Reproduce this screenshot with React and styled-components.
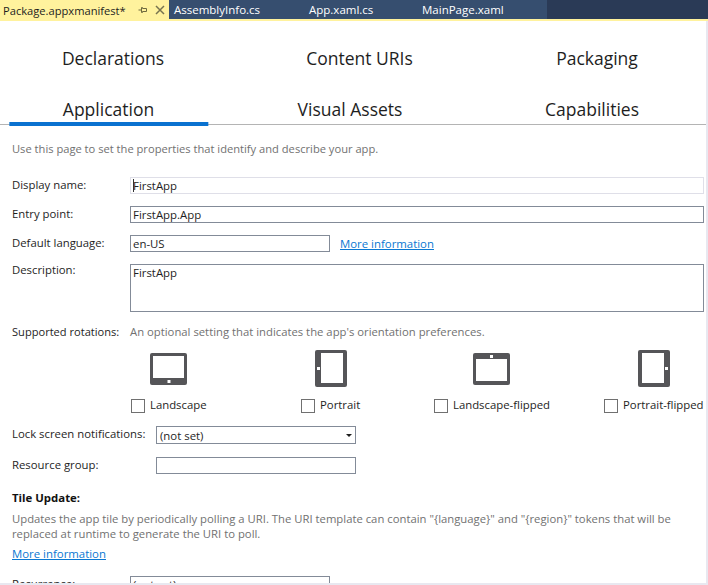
import styled, { createGlobalStyle } from "styled-components";

const GlobalStyle = createGlobalStyle`
  html, body {
    margin: 0;
    background: #fff;
    font-family: "Open Sans", "Noto Sans", sans-serif;
    font-size: 11.4px;
    color: #1e1e1e;
    overflow: hidden;
  }
  * { box-sizing: border-box; }
`;

const screens = {
  landscape: { w: 37, h: 32, sx: 3, sy: 3, sw: 31, sh: 22, dx: 17.5, dy: 27 },
  portrait: { w: 32, h: 37, sx: 6, sy: 3, sw: 22, sh: 30, dx: 2, dy: 17 },
  "landscape-flipped": { w: 37, h: 32, sx: 3, sy: 6, sw: 31, sh: 22, dx: 17, dy: 2 },
  "portrait-flipped": { w: 32, h: 37, sx: 4, sy: 3, sw: 22, sh: 30, dx: 27, dy: 17 },
};

function Tablet({ variant }) {
  const s = screens[variant];
  return (
    <svg width={s.w} height={s.h} viewBox={`0 0 ${s.w} ${s.h}`}>
      <rect width={s.w} height={s.h} rx="2" fill="#555558" />
      <rect x={s.sx} y={s.sy} width={s.sw} height={s.sh} fill="#fff" />
      <rect x={s.dx} y={s.dy} width="3" height="3" fill="#fff" />
    </svg>
  );
}

const options = [
  { label: "Landscape", variant: "landscape" },
  { label: "Portrait", variant: "portrait" },
  { label: "Landscape-flipped", variant: "landscape-flipped" },
  { label: "Portrait-flipped", variant: "portrait-flipped" },
];

const tileText =
  'Updates the app tile by periodically polling a URI. The URI template can contain "{language}" and "{region}" tokens that will be replaced at runtime to generate the URI to poll.';

export default function App() {
  return (
    <Page>
      <GlobalStyle />
      <DocStrip>
        <ActiveDoc>
          Package.appxmanifest*
          <DocActions>
            <svg width="10" height="10" viewBox="0 0 10 10">
              <path d="M0.5 5H3M3.5 2.5V7.5H4.5V6.5H8.5V3.5H4.5V2.5Z" fill="none" stroke="#6f6a3f" strokeWidth="1" />
            </svg>
            <svg width="10" height="10" viewBox="0 0 10 10">
              <path d="M1 1L9 9M9 1L1 9" stroke="#77734f" strokeWidth="1.5" />
            </svg>
          </DocActions>
        </ActiveDoc>
        <OpenDocs>
          <DocTab $width={135}>AssemblyInfo.cs</DocTab>
          <DocTab $width={113}>App.xaml.cs</DocTab>
          <DocTab $width={130}>MainPage.xaml</DocTab>
        </OpenDocs>
      </DocStrip>

      <Sections>
        <SectionRow>
          <Section $center={113}>Declarations</Section>
          <Section $center={359.5}>Content URIs</Section>
          <Section $center={597}>Packaging</Section>
        </SectionRow>
        <SectionRow>
          <Section $center={108.5} $active>Application</Section>
          <Section $center={350}>Visual Assets</Section>
          <Section $center={592}>Capabilities</Section>
        </SectionRow>
      </Sections>

      <Form>
        <Hint>Use this page to set the properties that identify and describe your app.</Hint>

        <Row $top={20}>
          <Label>Display name:</Label>
          <Field $fill $faint><Caret />FirstApp</Field>
        </Row>
        <Row $top={12}>
          <Label>Entry point:</Label>
          <Field $fill>FirstApp.App</Field>
        </Row>
        <Row $top={12}>
          <Label>Default language:</Label>
          <Field $width={200}>en-US</Field>
          <MoreLink $left={10}>More information</MoreLink>
        </Row>
        <Row $top={12} $start>
          <Label>Description:</Label>
          <Field $fill $height={48} $start>FirstApp</Field>
        </Row>

        <Row $top={12}>
          <RotationLabel>Supported rotations:</RotationLabel>
          <Hint $size={11.3}>An optional setting that indicates the app's orientation preferences.</Hint>
        </Row>
        <Rotations>
          {options.map((o) => (
            <Rotation key={o.label}>
              <IconSlot><Tablet variant={o.variant} /></IconSlot>
              <CheckRow>
                <Check />
                {o.label}
              </CheckRow>
            </Rotation>
          ))}
        </Rotations>

        <Row $top={13}>
          <WideLabel>Lock screen notifications:</WideLabel>
          <Select>
            (not set)
            <Arrow />
          </Select>
        </Row>
        <Row $top={13}>
          <WideLabel>Resource group:</WideLabel>
          <Field $width={200} />
        </Row>

        <Heading>Tile Update:</Heading>
        <Paragraph>{tileText}</Paragraph>
        <MoreLink $block>More information</MoreLink>

        <Row $top={14}>
          <Label>Recurrence:</Label>
          <Field $width={200}>(not set)</Field>
        </Row>
      </Form>

      <ScrollEdge />
      <BottomEdge />
    </Page>
  );
}

const Page = styled.div`
  position: relative;
  width: 708px;
  height: 585px;
  overflow: hidden;
  background: #fff;
`;

const DocStrip = styled.div`
  display: flex;
  height: 21px;
  background: #2a3a56;
  border-bottom: 2px solid #fff29d;
`;

const ActiveDoc = styled.div`
  display: flex;
  align-items: center;
  justify-content: space-between;
  width: 169px;
  height: 21px;
  padding: 0 4px 1px 3px;
  background: #fff29d;
  color: #1e1e1e;
  font-size: 11.15px;
  white-space: nowrap;
`;

const DocActions = styled.span`
  display: flex;
  align-items: center;
  gap: 7px;
`;

const OpenDocs = styled.div`
  display: flex;
  background: #364e6f;
  height: 19px;
`;

const DocTab = styled.div`
  width: ${(p) => p.$width}px;
  padding-left: 5px;
  color: #fff;
  font-size: 11.5px;
  line-height: 19px;
  white-space: nowrap;
`;

const Sections = styled.div`
  height: 104px;
  border-bottom: 1px solid #b4b4b4;
`;

const SectionRow = styled.div`
  position: relative;
  height: 51px;
`;

const Section = styled.div`
  position: absolute;
  left: ${(p) => p.$center}px;
  bottom: 0;
  transform: translateX(-50%);
  font-size: 17.5px;
  line-height: 28px;
  color: #1e1e1e;
  white-space: nowrap;

  ${(p) =>
    p.$active &&
    `
    &::after {
      content: "";
      position: absolute;
      left: -53.5px;
      width: 199px;
      bottom: -3px;
      height: 4px;
      background: #0a72d0;
    }
  `}
`;

const Form = styled.div`
  padding: 16px 4px 0 12px;
`;

const Hint = styled.div`
  color: #717171;
  font-size: ${(p) => p.$size || 11.15}px;
  line-height: 16px;
  white-space: nowrap;
`;

const Row = styled.div`
  display: flex;
  align-items: ${(p) => (p.$start ? "flex-start" : "center")};
  margin-top: ${(p) => p.$top}px;
`;

const Label = styled.div`
  flex: 0 0 118px;
  margin-top: -2px;
  font-size: 11.35px;
  line-height: 16px;
  white-space: nowrap;
`;

const RotationLabel = styled(Label)`
  margin-top: 0;
  font-size: 11.1px;
`;

const WideLabel = styled(Label)`
  flex-basis: 144px;
`;

const Field = styled.div`
  display: flex;
  align-items: ${(p) => (p.$start ? "flex-start" : "center")};
  flex: ${(p) => (p.$fill ? "1" : `0 0 ${p.$width}px`)};
  height: ${(p) => p.$height || 17}px;
  padding: 0 2px;
  border: 1px solid ${(p) => (p.$faint ? "#dfdfe8" : "#838b98")};
  background: #fff;
  color: #1e1e1e;
  font-size: 11.4px;
  line-height: 15px;
`;

const Caret = styled.span`
  width: 1px;
  height: 13px;
  margin-right: -1px;
  background: #333;
`;

const MoreLink = styled.a`
  display: ${(p) => (p.$block ? "block" : "inline")};
  margin-left: ${(p) => p.$left || 0}px;
  margin-top: ${(p) => (p.$block ? 5 : 0)}px;
  color: #0a78d2;
  font-size: 11.4px;
  line-height: 16px;
  text-decoration: underline;
`;

const Rotations = styled.div`
  display: grid;
  grid-template-columns: 170px 133px 170px 100px;
  margin: 10px 0 0 119px;
`;

const Rotation = styled.div`
  display: inline-flex;
  flex-direction: column;
  align-items: center;
  justify-self: start;
`;

const IconSlot = styled.div`
  display: flex;
  align-items: center;
  justify-content: center;
  height: 37px;
`;

const CheckRow = styled.div`
  display: flex;
  align-items: center;
  gap: 5px;
  margin-top: 10px;
  font-size: 11.35px;
  line-height: 16px;
  white-space: nowrap;
`;

const Check = styled.span`
  width: 14px;
  height: 14px;
  margin-top: 2px;
  border: 1px solid #707070;
  background: #fff;
`;

const Select = styled.div`
  position: relative;
  display: flex;
  align-items: center;
  width: 200px;
  height: 18px;
  padding: 0 3px;
  border: 1px solid #838b98;
  font-size: 11.4px;
`;

const Arrow = styled.span`
  position: absolute;
  right: 3px;
  top: 7px;
  border-left: 3px solid transparent;
  border-right: 3px solid transparent;
  border-top: 3px solid #1e1e1e;
`;

const Heading = styled.div`
  margin-top: 16px;
  font-weight: 700;
  font-size: 11.4px;
  line-height: 16px;
  color: #111;
`;

const Paragraph = styled.div`
  margin-top: 5px;
  width: 688px;
  color: #717171;
  font-size: 11.3px;
  line-height: 15px;
`;

const ScrollEdge = styled.div`
  position: absolute;
  top: 21px;
  right: 0;
  bottom: 0;
  width: 2px;
  background: #e8e8f0;
`;

const BottomEdge = styled.div`
  position: absolute;
  left: 0;
  right: 0;
  bottom: 0;
  height: 2px;
  background: #e8e8f0;
`;
